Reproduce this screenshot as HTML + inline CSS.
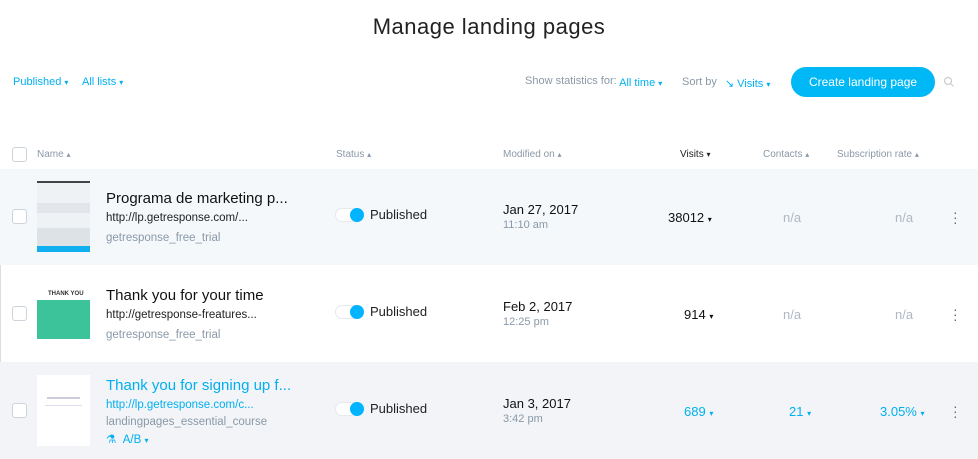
<!DOCTYPE html><html><head><style>
body{margin:0;width:978px;height:459px;overflow:hidden;background:#fff;font-family:"Liberation Sans",sans-serif;position:relative}
.a{position:absolute;white-space:nowrap}
.blue{color:#00b0f0}.g{color:#8a99a8}
.cb{position:absolute;left:12px;width:13px;height:13px;border:1px solid #ccd3da;border-radius:3px;background:#fff}
.tog{position:absolute;left:336px;width:26px;height:12px;border-radius:6px;background:#fff;box-shadow:0 0 0 1px #e6eaee}
.tog:after{content:"";position:absolute;right:-2px;top:-1px;width:14px;height:14px;border-radius:50%;background:#00b4ff}
.car{font-size:8px}
.dots{position:absolute;left:953px;width:4px;font-size:14px;color:#666;line-height:5px}
.na{color:#b0b8c2}
</style></head><body>
<div class="a" style="left:0;width:978px;top:14px;text-align:center;font-size:22px;color:#222;letter-spacing:.5px">Manage landing pages</div>
<div class="a blue" style="left:13px;top:76px;font-size:11px">Published <span class="car">▾</span></div>
<div class="a blue" style="left:82px;top:76px;font-size:11px">All lists <span class="car">▾</span></div>
<div class="a g" style="left:525px;top:75px;font-size:11px">Show statistics for: <span class="blue" style="position:relative;top:2px">All time <span class="car">▾</span></span></div>
<div class="a g" style="left:682px;top:75px;font-size:11px">Sort by <span class="blue" style="position:relative;top:2px;margin-left:5px">↘ Visits <span class="car">▾</span></span></div>
<div class="a" style="left:791px;top:67px;width:144px;height:30px;border-radius:15px;background:#00b8f5;color:#fff;font-size:12px;text-align:center;line-height:31px">Create landing page</div>
<svg class="a" style="left:943px;top:76px" width="12" height="12"><circle cx="5" cy="5" r="3.5" fill="none" stroke="#ccc" stroke-width="1.2"/><line x1="7.5" y1="7.5" x2="10.5" y2="10.5" stroke="#ccc" stroke-width="1.2"/></svg>
<div class="cb" style="top:147px"></div>
<div class="a g" style="left:37px;top:149px;font-size:10px">Name <span class="car">▴</span></div>
<div class="a g" style="left:336px;top:149px;font-size:10px">Status <span class="car">▴</span></div>
<div class="a g" style="left:503px;top:149px;font-size:10px">Modified on <span class="car">▴</span></div>
<div class="a" style="left:680px;top:149px;font-size:10px;color:#222">Visits <span class="car">▾</span></div>
<div class="a g" style="left:763px;top:149px;font-size:10px">Contacts <span class="car">▴</span></div>
<div class="a g" style="left:837px;top:149px;font-size:10px">Subscription rate <span class="car">▴</span></div>
<div class="a" style="left:0;top:169px;width:978px;height:96px;background:#f4f8fa"></div>
<div class="a" style="left:0;top:362px;width:978px;height:97px;background:#f2f4f7"></div>
<div class="a" style="left:0;top:265px;width:1px;height:97px;background:#ddd"></div>
<!-- row1 -->
<div class="cb" style="top:209px"></div>
<div class="a" style="left:37px;top:181px;width:53px;height:69px;background:#eef2f4;border-top:2px solid #444"><div style="margin-top:20px;height:10px;background:#e2e6ea"></div><div style="margin-top:15px;height:18px;background:#dde2e6;border-bottom:6px solid #10b0f0"></div></div>
<div class="a" style="left:106px;top:190px;font-size:15px;color:#111">Programa de marketing p...</div>
<div class="a" style="left:106px;top:212px;font-size:11.5px;color:#222">http://lp.getresponse.com/...</div>
<div class="a g" style="left:106px;top:232px;font-size:11.5px">getresponse_free_trial</div>
<div class="tog" style="top:209px"></div>
<div class="a" style="left:370px;top:207px;font-size:13px;color:#222">Published</div>
<div class="a" style="left:503px;top:202px;font-size:13px;color:#111">Jan 27, 2017</div>
<div class="a g" style="left:503px;top:219px;font-size:11px">11:10 am</div>
<div class="a" style="left:668px;top:210px;font-size:13px;color:#111">38012 <span class="car">▾</span></div>
<div class="a na" style="left:783px;top:210px;font-size:13px">n/a</div>
<div class="a na" style="left:895px;top:210px;font-size:13px">n/a</div>
<div class="dots" style="top:210px">·<br>·<br>·</div>
<!-- row2 -->
<div class="cb" style="top:306px"></div>
<div class="a" style="left:37px;top:276px;width:53px;height:63px;background:#fff"><div style="margin-top:24px;height:39px;background:#3cc39a"></div></div>
<div class="a" style="left:48px;top:291px;font-size:6px;color:#333;font-weight:bold">THANK YOU</div>
<div class="a" style="left:106px;top:287px;font-size:15px;color:#111">Thank you for your time</div>
<div class="a" style="left:106px;top:309px;font-size:11.5px;color:#222">http://getresponse-freatures...</div>
<div class="a g" style="left:106px;top:329px;font-size:11.5px">getresponse_free_trial</div>
<div class="tog" style="top:306px"></div>
<div class="a" style="left:370px;top:304px;font-size:13px;color:#222">Published</div>
<div class="a" style="left:503px;top:299px;font-size:13px;color:#111">Feb 2, 2017</div>
<div class="a g" style="left:503px;top:316px;font-size:11px">12:25 pm</div>
<div class="a" style="left:684px;top:307px;font-size:13px;color:#111">914 <span class="car">▾</span></div>
<div class="a na" style="left:783px;top:307px;font-size:13px">n/a</div>
<div class="a na" style="left:895px;top:307px;font-size:13px">n/a</div>
<div class="dots" style="top:307px">·<br>·<br>·</div>
<!-- row3 -->
<div class="cb" style="top:403px"></div>
<div class="a" style="left:37px;top:375px;width:53px;height:71px;background:#fff"><div style="margin:22px 10px 0;height:2px;background:#ccd"></div><div style="margin:6px 8px 0;height:1px;background:#dde"></div></div>
<div class="a" style="left:106px;top:377px;font-size:15px" ><span class="blue">Thank you for signing up f...</span></div>
<div class="a blue" style="left:106px;top:399px;font-size:11.5px">http://lp.getresponse.com/c...</div>
<div class="a g" style="left:106px;top:416px;font-size:11.5px">landingpages_essential_course</div>
<div class="a blue" style="left:106px;top:432px;font-size:11.5px">⚗ &nbsp;A/B <span class="car">▾</span></div>
<div class="tog" style="top:403px"></div>
<div class="a" style="left:370px;top:401px;font-size:13px;color:#222">Published</div>
<div class="a" style="left:503px;top:396px;font-size:13px;color:#111">Jan 3, 2017</div>
<div class="a g" style="left:503px;top:413px;font-size:11px">3:42 pm</div>
<div class="a blue" style="left:684px;top:404px;font-size:13px">689 <span class="car">▾</span></div>
<div class="a blue" style="left:789px;top:404px;font-size:13px">21 <span class="car">▾</span></div>
<div class="a blue" style="left:880px;top:404px;font-size:13px">3.05% <span class="car">▾</span></div>
<div class="dots" style="top:404px">·<br>·<br>·</div>
</body></html>
